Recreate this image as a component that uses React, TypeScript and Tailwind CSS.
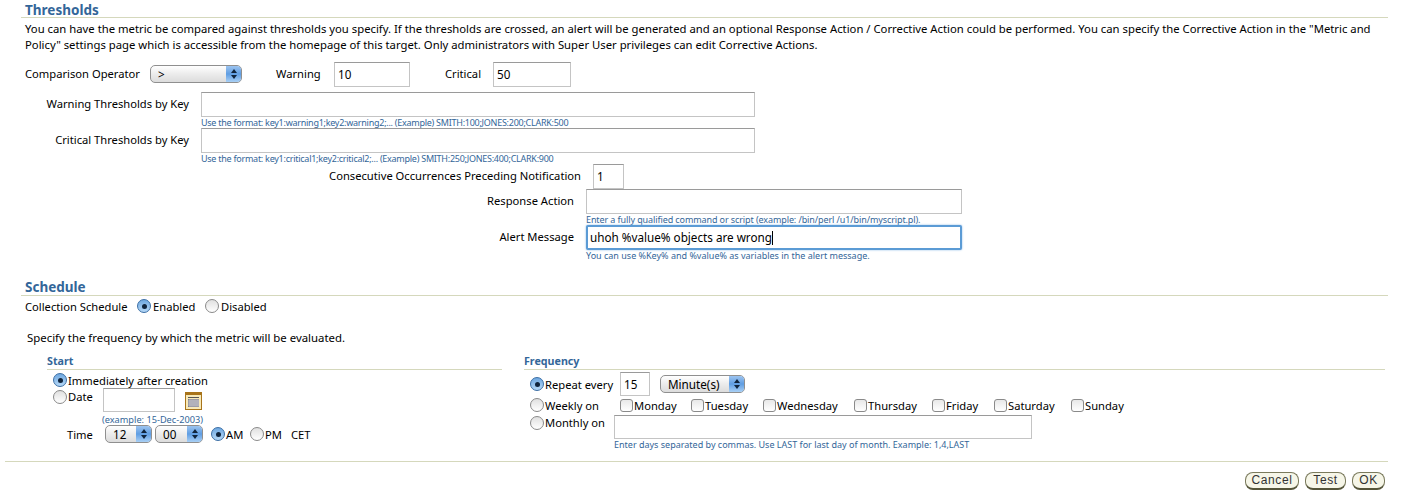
import React from 'react';

const hintClass = 'text-[9px] leading-[12px] text-[#336699]';
const sectionClass = 'ml-[21px] mr-[23px] h-[18px] border-b border-[#d5d8bc] pl-[4px] text-[13.5px] font-bold text-[#336699]';
const subHeadClass = 'h-[15px] border-b border-[#d5d8bc] text-[10.7px] font-bold leading-[13px] text-[#336699]';

function Input({ className, value }: { className: string; value?: string }) {
  return (
    <div className={`flex items-center border border-[#c4c4c4] border-t-[#9a9a9a] bg-white pl-[3px] text-[11.7px] text-black ${className}`}>
      {value}
    </div>
  );
}

function Radio({ checked }: { checked?: boolean }) {
  return (
    <span
      className={`flex h-[14px] w-[14px] shrink-0 items-center justify-center rounded-full border ${
        checked
          ? 'border-[#3a6ea5] bg-gradient-to-b from-[#6fa8e0] to-[#b5d8f7]'
          : 'border-[#8a8a8a] bg-gradient-to-b from-[#e0e0e0] to-[#ffffff]'
      }`}
    >
      {checked && <span className="h-[5px] w-[5px] rounded-full bg-[#10243c]" />}
    </span>
  );
}

function Checkbox() {
  return <span className="h-[13px] w-[13px] shrink-0 rounded-[3px] border border-[#8a8a8a] bg-gradient-to-b from-[#e8e8e8] to-white" />;
}

function Select({ className, value }: { className: string; value: string }) {
  return (
    <div className={`flex h-[18px] overflow-hidden rounded-[5px] border border-[#8f8f8f] bg-gradient-to-b from-white via-[#ececec] to-[#dcdcdc] text-[11.7px] text-black ${className}`}>
      <span className="flex-1 pl-[7px] leading-[16px]">{value}</span>
      <span className="flex w-[15px] flex-col items-center justify-center gap-[2px] bg-gradient-to-b from-[#9cc4f0] via-[#5f9de2] to-[#a9d0f5]">
        <span className="h-0 w-0 border-x-[3px] border-b-[4px] border-x-transparent border-b-[#10243c]" />
        <span className="h-0 w-0 border-x-[3px] border-t-[4px] border-x-transparent border-t-[#10243c]" />
      </span>
    </div>
  );
}

function CalendarIcon() {
  return (
    <svg width="17" height="18" viewBox="0 0 17 18" className="shrink-0">
      <rect x="0.5" y="0.5" width="16" height="17" fill="#f7e9b8" stroke="#a8741a" />
      <rect x="1" y="1" width="15" height="2" fill="#a8741a" />
      <rect x="3" y="5" width="11" height="1" fill="#555" />
      <rect x="3" y="7" width="11" height="8" fill="#7c7c8c" />
      <path d="M3 9h11M3 11h11M3 13h11M5 7v8M7 7v8M9 7v8M11 7v8M13 7v8" stroke="#e8e8e8" strokeWidth="0.6" />
    </svg>
  );
}

function Button({ label, className }: { label: string; className: string }) {
  return (
    <div className={`flex h-[18px] items-center justify-center rounded-[8px] border border-[#7a7a5c] border-b-2 border-b-[#55553a] bg-[#f6f6e8] font-['Liberation_Sans',sans-serif] text-[12px] tracking-[0.6px] text-[#333] ${className}`}>
      {label}
    </div>
  );
}

function Day({ label, className }: { label: string; className: string }) {
  return (
    <div className={`flex items-center gap-[1px] ${className}`}>
      <Checkbox />
      <span>{label}</span>
    </div>
  );
}

export default function App() {
  return (
    <div className="h-[500px] w-[1411px] overflow-hidden bg-white font-['Noto_Sans',sans-serif] text-[11.2px] leading-[15px] text-black">
      {/* Thresholds */}
      <div className={`${sectionClass} leading-[20px]`}>Thresholds</div>
      <p className="ml-[25px] mr-[20px] mt-[3px] text-[11.3px] leading-[16px]">
        You can have the metric be compared against thresholds you specify. If the thresholds are crossed, an alert will be generated and an optional Response Action / Corrective Action could be performed. You can specify the Corrective Action in the "Metric and Policy" settings page which is accessible from the homepage of this target. Only administrators with Super User privileges can edit Corrective Actions.
      </p>

      <div className="ml-[25px] mt-[9px] flex h-[25px] items-center [&>span]:mb-[2px]">
        <span className="w-[125px]">Comparison Operator</span>
        <Select className="mb-[2px] w-[92px]" value=">" />
        <span className="ml-[34px] w-[58px]">Warning</span>
        <Input className="h-[25px] w-[76px]" value="10" />
        <span className="ml-[35px] w-[48px]">Critical</span>
        <Input className="h-[25px] w-[78px]" value="50" />
      </div>

      <div className="mt-[5px] flex h-[25px] items-center [&>span]:mb-[2px]">
        <span className="w-[189px] text-right">Warning Thresholds by Key</span>
        <Input className="ml-[12px] h-[25px] w-[554px]" />
      </div>
      <div className={`ml-[201px] h-[11px] tracking-[-0.26px] ${hintClass}`}>Use the format: key1:warning1;key2:warning2;... (Example) SMITH:100;JONES:200;CLARK:500</div>
      <div className="flex h-[25px] items-center [&>span]:mb-[2px]">
        <span className="w-[189px] text-right">Critical Thresholds by Key</span>
        <Input className="ml-[12px] h-[25px] w-[554px]" />
      </div>
      <div className={`ml-[201px] h-[11px] tracking-[-0.26px] ${hintClass}`}>Use the format: key1:critical1;key2:critical2;... (Example) SMITH:250;JONES:400;CLARK:900</div>

      <div className="flex h-[25px] items-center [&>span]:mb-[2px]">
        <span className="w-[581px] text-right">Consecutive Occurrences Preceding Notification</span>
        <Input className="ml-[12px] h-[25px] w-[31px]" value="1" />
      </div>
      <div className="flex h-[25px] items-center [&>span]:mb-[2px]">
        <span className="w-[574px] text-right">Response Action</span>
        <Input className="ml-[12px] h-[25px] w-[376px]" />
      </div>
      <div className={`ml-[586px] h-[11px] tracking-[-0.1px] ${hintClass}`}>Enter a fully qualified command or script (example: /bin/perl /u1/bin/myscript.pl).</div>
      <div className="flex h-[25px] items-center [&>span]:mb-[2px]">
        <span className="w-[574px] text-right">Alert Message</span>
        <div className="ml-[12px] flex h-[25px] w-[376px] items-center rounded-[2px] border-2 border-[#5b9bd5] bg-white pl-[2px] text-[11.7px] shadow-[0_0_2px_#7fb2e5]">
          uhoh %value% objects are wrong
          <span className="h-[14px] w-px bg-black" />
        </div>
      </div>
      <div className={`ml-[586px] h-[11px] ${hintClass}`}>You can use %Key% and %value% as variables in the alert message.</div>

      {/* Schedule */}
      <div className={`${sectionClass} mt-[17px] leading-[19px]`}>Schedule</div>
      <div className="ml-[25px] flex h-[20px] items-center">
        <span className="w-[112px]">Collection Schedule</span>
        <Radio checked />
        <span className="ml-[2px] w-[52px]">Enabled</span>
        <Radio />
        <span className="ml-[2px]">Disabled</span>
      </div>
      <p className="ml-[27px] mt-[14px] text-[11.4px] leading-[15px]">Specify the frequency by which the metric will be evaluated.</p>

      <div className="mt-[10px] flex">
        <div className="ml-[47px] w-[455px]">
          <div className={subHeadClass}>Start</div>
          <div className="ml-[6px] mt-[2px] flex h-[16px] items-center gap-[1px]">
            <Radio checked />
            <span>Immediately after creation</span>
          </div>
          <div className="ml-[6px] flex h-[25px] items-start">
            <div className="flex h-[17px] w-[50px] items-center gap-[1px]">
              <Radio />
              <span>Date</span>
            </div>
            <Input className="h-[24px] w-[72px]" />
            <span className="ml-[10px] mt-[4px]"><CalendarIcon /></span>
          </div>
          <div className="ml-[55px] mt-[1px] h-[13px] text-[9.2px] leading-[12px] text-[#336699]">(example: 15-Dec-2003)</div>
          <div className="ml-[20px] mt-[-3px] flex h-[20px] items-center">
            <span className="w-[38px]">Time</span>
            <Select className="w-[47px]" value="12" />
            <Select className="ml-[3px] w-[48px]" value="00" />
            <span className="ml-[8px]"><Radio checked /></span>
            <span className="ml-[1px] w-[24px]">AM</span>
            <span><Radio /></span>
            <span className="ml-[1px] w-[26px]">PM</span>
            <span>CET</span>
          </div>
        </div>

        <div className="ml-[22px] w-[861px]">
          <div className={subHeadClass}>Frequency</div>
          <div className="ml-[6px] mt-[2px] flex h-[24px] items-center">
            <Radio checked />
            <span className="ml-[1px] w-[75px]">Repeat every</span>
            <Input className="h-[24px] w-[30px]" value="15" />
            <Select className="mb-[1px] ml-[10px] w-[85px]" value="Minute(s)" />
          </div>
          <div className="ml-[6px] flex h-[18px] items-center">
            <Radio />
            <span className="ml-[1px] w-[75px]">Weekly on</span>
            <Day label="Monday" className="w-[71px]" />
            <Day label="Tuesday" className="w-[72px]" />
            <Day label="Wednesday" className="w-[91px]" />
            <Day label="Thursday" className="w-[78px]" />
            <Day label="Friday" className="w-[62px]" />
            <Day label="Saturday" className="w-[77px]" />
            <Day label="Sunday" className="w-[60px]" />
          </div>
          <div className="ml-[6px] flex h-[24px] items-start">
            <div className="flex h-[17px] items-center">
              <Radio />
              <span className="ml-[1px] w-[75px]">Monthly on</span>
            </div>
            <Input className="ml-[-6px] mt-[1px] h-[24px] w-[418px]" />
          </div>
          <div className={`ml-[90px] mt-[1px] h-[12px] ${hintClass}`}>Enter days separated by commas. Use LAST for last day of month. Example: 1,4,LAST</div>
        </div>
      </div>

      {/* Footer */}
      <div className="ml-[5px] mr-[23px] mt-[10px] h-px bg-[#d5d8bc]" />
      <div className="mr-[26px] mt-[10px] flex justify-end gap-[6px]">
        <Button label="Cancel" className="w-[54px]" />
        <Button label="Test" className="w-[41px]" />
        <Button label="OK" className="w-[33px]" />
      </div>
    </div>
  );
}
